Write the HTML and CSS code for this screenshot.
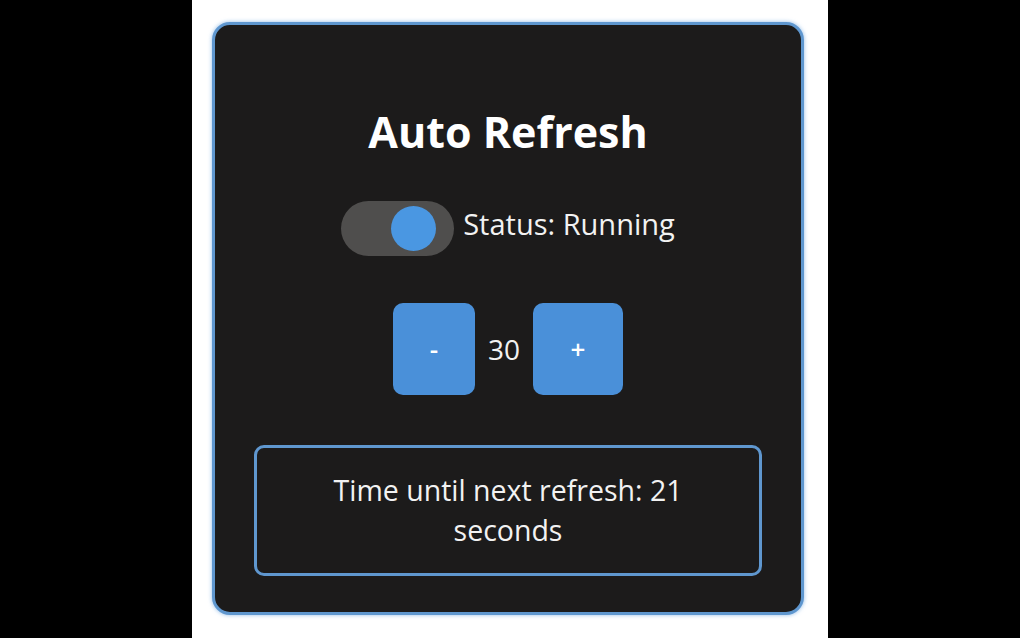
FILE: index.html
```html
<!DOCTYPE html>
<html lang="en">
<head>
  <meta charset="UTF-8" />
  <title>Auto Refresh</title>
  <link rel="stylesheet" href="styles.css">
</head>
<body>
  <div class="page">
    <div class="card">
      <h1>Auto Refresh</h1>

      <div class="status-row">
        <div class="toggle"><span class="knob"></span></div>
        <span class="status">Status: Running</span>
      </div>

      <div class="interval">
        <button class="minus">-</button>
        <span class="value">30</span>
        <button class="plus">+</button>
      </div>

      <div class="countdown">Time until next refresh: 21 seconds</div>
    </div>
  </div>
</body>
</html>
```

FILE: styles.css
```css
:root {
  --card-bg: #1c1b1b;
  --blue: #4a90d9;
  --border-blue: #5f97cf;
}

body {
  margin: 0;
  background-color: #000;
  font-family: 'Open Sans', sans-serif;
}

.page {
  width: 636px;
  height: 638px;
  margin: 0 auto;
  background-color: #fff;
  padding: 22px 20px 0;
  box-sizing: border-box;
}

.card {
  width: 592px;
  height: 593px;
  box-sizing: border-box;
  background-color: var(--card-bg);
  border: 3px solid var(--border-blue);
  border-radius: 18px;
  box-shadow: 0 0 4px rgba(74, 144, 217, 0.6);
  color: #fff;
  display: flex;
  flex-direction: column;
  align-items: center;
  padding: 78px 40px 0;
}

h1 {
  margin: 0;
  font-size: 43px;
  line-height: 58px;
  font-weight: 700;
}

.status-row {
  display: flex;
  align-items: center;
  gap: 9px;
  margin-top: 40px;
}

.toggle {
  width: 113px;
  height: 55px;
  border-radius: 28px;
  background-color: #4f4e4d;
  position: relative;
}

.knob {
  position: absolute;
  left: 50px;
  top: 5px;
  width: 45px;
  height: 45px;
  border-radius: 50%;
  background-color: #4a97e2;
}

.status {
  font-size: 29px;
  color: #f2f2f2;
  margin-bottom: 10px;
}

.interval {
  display: flex;
  align-items: center;
  gap: 13px;
  margin-top: 47px;
}

.interval button {
  height: 92px;
  border: none;
  border-radius: 10px;
  background-color: var(--blue);
  color: #fff;
  font-family: inherit;
  font-size: 26px;
  font-weight: 600;
}

.minus {
  width: 82px;
}

.plus {
  width: 90px;
}

.value {
  font-size: 28px;
  color: #f2f2f2;
}

.countdown {
  margin-top: 50px;
  width: 508px;
  box-sizing: border-box;
  border: 3px solid var(--border-blue);
  border-radius: 10px;
  padding: 22px 50px 23px;
  text-align: center;
  font-size: 28.5px;
  line-height: 40px;
  color: #f2f2f2;
}
```
